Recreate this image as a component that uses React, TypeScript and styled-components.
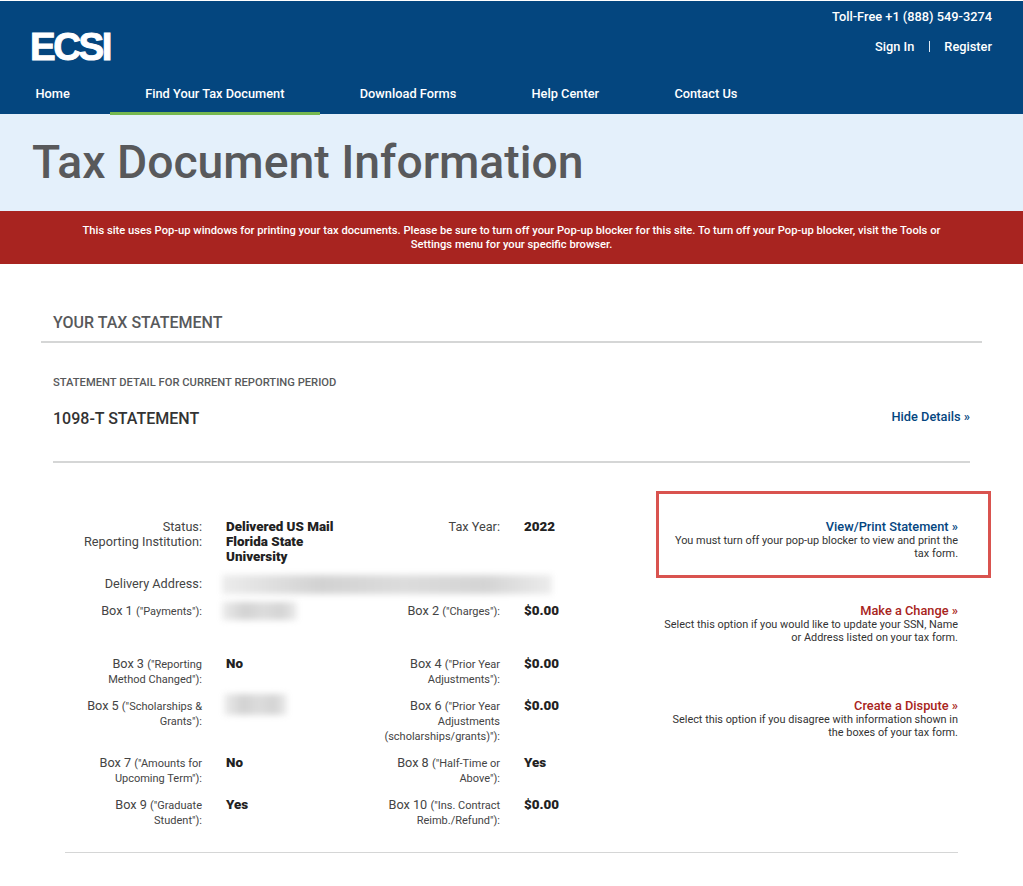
import React from 'react';
import styled, { createGlobalStyle } from 'styled-components';

const GlobalStyle = createGlobalStyle`
  html, body {
    margin: 0;
    padding: 0;
    background: #fff;
    font-family: Roboto, "Liberation Sans", sans-serif;
    color: #333;
  }
  * { box-sizing: border-box; }
`;

const Page = styled.div`
  width: 1023px;
  height: 886px;
  overflow: hidden;
`;

const Header = styled.header`
  height: 114px;
  margin-top: 1px;
  background: #04467f;
  display: flex;
  flex-direction: column;
  color: #fff;
`;

const TopRow = styled.div`
  height: 77px;
  display: flex;
  justify-content: space-between;
  padding: 0 31px;
`;

const Logo = styled.div`
  margin: 24px 0 0 -1px;
  font-family: "Liberation Sans", Arial, sans-serif;
  font-weight: 700;
  font-size: 38.5px;
  line-height: 44px;
  letter-spacing: -2.5px;
  -webkit-text-stroke: 1px #fff;
  color: #fff;
`;

const Account = styled.div`
  display: flex;
  flex-direction: column;
  align-items: flex-end;
  font-size: 12.8px;
  font-weight: 500;
`;

const Phone = styled.div`
  margin-top: 8px;
  line-height: 15px;
`;

const AccountLinks = styled.div`
  margin-top: 15px;
  display: flex;
  align-items: center;
  line-height: 15px;
`;

const AccountLink = styled.a`
  color: #fff;
`;

const Divider = styled.span`
  width: 1px;
  height: 11px;
  margin: 0 14px 0 15px;
  background: #dfe9f3;
`;

const Nav = styled.nav`
  flex: 1;
  display: flex;
  gap: 4.3px;
`;

const NavItem = styled.a<{ $active?: boolean }>`
  padding: 8px 35.5px 0 35.5px;
  font-size: 12.8px;
  font-weight: 500;
  line-height: 15px;
  color: #fff;
  border-bottom: 3px solid ${(p) => (p.$active ? '#76b84f' : 'transparent')};
`;

const Hero = styled.div`
  height: 97px;
  margin-top: -1px;
  padding: 20px 32px 0;
  background: #e4f0fb;
`;

const HeroTitle = styled.h1`
  margin: 0;
  font-size: 46.3px;
  font-weight: 500;
  line-height: 56px;
  color: #58595b;
`;

const Notice = styled.div`
  height: 53px;
  padding: 13px 80px 0;
  background: #a82420;
  color: #fff;
  font-size: 11.2px;
  font-weight: 500;
  line-height: 14px;
  text-align: center;
`;

const Content = styled.main`
  padding: 49px 41px 0;
`;

const SectionTitle = styled.h2`
  margin: 0;
  padding: 0 12px 10px;
  height: 30px;
  border-bottom: 2px solid #d5d6d6;
  font-size: 16px;
  font-weight: 500;
  line-height: 19px;
  color: #58595b;
`;

const Statement = styled.section`
  padding: 0 12px;
`;

const Kicker = styled.div`
  margin-top: 34px;
  font-size: 11.2px;
  font-weight: 500;
  line-height: 12px;
  color: #58595b;
`;

const StatementHead = styled.div`
  height: 54px;
  margin-top: 20px;
  display: flex;
  justify-content: space-between;
  border-bottom: 2px solid #d5d6d6;
`;

const StatementName = styled.div`
  font-size: 16px;
  font-weight: 500;
  line-height: 19px;
  color: #333;
`;

const HideLink = styled.a`
  font-size: 12.8px;
  font-weight: 500;
  line-height: 15px;
  color: #04467f;
`;

const Details = styled.div`
  display: flex;
  align-items: flex-start;
  justify-content: space-between;
  margin-top: 28px;
  margin-right: -21px;
`;

const Table = styled.div`
  width: 530px;
  padding-top: 28px;
`;

const Row = styled.div<{ $height: number }>`
  height: ${(p) => p.$height}px;
  display: grid;
  grid-template-columns: 149px 174px 124px 24px 60px;
`;

const Label = styled.div`
  padding-left: 27px;
  font-size: 12.7px;
  line-height: 15px;
  text-align: right;
  color: #444;
`;

const Small = styled.span`
  font-size: 11px;
  line-height: 1;
`;

const Value = styled.div`
  padding-left: 24px;
  font-size: 13.4px;
  font-weight: 900;
  line-height: 15px;
  color: #222;
`;

const ValueEnd = styled(Value)`
  padding-left: 0;
  grid-column: 5;
`;

const LabelEnd = styled(Label)`
  padding-left: 0;
  grid-column: 3;
`;

const ValueWide = styled(Value)`
  grid-column: 2 / span 4;
`;

const Blur = styled.div<{ $width: number; $height: number; $left: number; $top: number }>`
  width: ${(p) => p.$width}px;
  height: ${(p) => p.$height}px;
  margin-left: ${(p) => p.$left}px;
  margin-top: ${(p) => p.$top}px;
  background: linear-gradient(90deg, #ececec 0%, #d2d2d2 30%, #dcdcdc 55%, #d4d4d4 80%, #ececec 100%);
  filter: blur(3px);
`;

const Aside = styled.aside`
  width: 335px;
  display: flex;
  flex-direction: column;
`;

const Callout = styled.div<{ $boxed?: boolean; $height: number }>`
  height: ${(p) => p.$height}px;
  padding: ${(p) => (p.$boxed ? '26px 30px 0 3px' : '23px 30px 0 3px')};
  border: 3px solid ${(p) => (p.$boxed ? '#d9534f' : 'transparent')};
  text-align: right;
`;

const CalloutLink = styled.a<{ $tone: string }>`
  display: block;
  font-size: 12.8px;
  font-weight: 500;
  line-height: 14px;
  color: ${(p) => p.$tone};
`;

const CalloutText = styled.div`
  font-size: 10.9px;
  line-height: 13px;
  color: #333;
`;

const BottomRule = styled.div`
  height: 1px;
  margin: 0 24px;
  background: #d5d6d6;
`;

function App() {
  return (
    <Page>
      <GlobalStyle />
      <Header>
        <TopRow>
          <Logo>ECSI</Logo>
          <Account>
            <Phone>Toll-Free +1 (888) 549-3274</Phone>
            <AccountLinks>
              <AccountLink>Sign In</AccountLink>
              <Divider />
              <AccountLink>Register</AccountLink>
            </AccountLinks>
          </Account>
        </TopRow>
        <Nav>
          <NavItem>Home</NavItem>
          <NavItem $active>Find Your Tax Document</NavItem>
          <NavItem>Download Forms</NavItem>
          <NavItem>Help Center</NavItem>
          <NavItem>Contact Us</NavItem>
        </Nav>
      </Header>
      <Hero>
        <HeroTitle>Tax Document Information</HeroTitle>
      </Hero>
      <Notice>
        This site uses Pop-up windows for printing your tax documents. Please be sure to turn off your Pop-up blocker for this site. To turn off your Pop-up blocker, visit the Tools or Settings menu for your specific browser.
      </Notice>
      <Content>
        <SectionTitle>YOUR TAX STATEMENT</SectionTitle>
        <Statement>
          <Kicker>STATEMENT DETAIL FOR CURRENT REPORTING PERIOD</Kicker>
          <StatementHead>
            <StatementName>1098-T STATEMENT</StatementName>
            <HideLink>Hide Details »</HideLink>
          </StatementHead>
          <Details>
            <Table>
              <Row $height={57}>
                <Label>Status:<br />Reporting Institution:</Label>
                <Value>Delivered US Mail<br />Florida State<br />University</Value>
                <LabelEnd>Tax Year:</LabelEnd>
                <ValueEnd>2022</ValueEnd>
              </Row>
              <Row $height={27}>
                <Label>Delivery Address:</Label>
                <ValueWide><Blur $width={330} $height={19} $left={-4} $top={-1} /></ValueWide>
              </Row>
              <Row $height={53}>
                <Label>Box 1 <Small>("Payments"):</Small></Label>
                <Value><Blur $width={75} $height={18} $left={-4} $top={-1} /></Value>
                <LabelEnd>Box 2 <Small>("Charges"):</Small></LabelEnd>
                <ValueEnd>$0.00</ValueEnd>
              </Row>
              <Row $height={42}>
                <Label>Box 3 <Small>("Reporting Method Changed"):</Small></Label>
                <Value>No</Value>
                <LabelEnd>Box 4 <Small>("Prior Year Adjustments"):</Small></LabelEnd>
                <ValueEnd>$0.00</ValueEnd>
              </Row>
              <Row $height={57}>
                <Label>Box 5 <Small>("Scholarships &amp; Grants"):</Small></Label>
                <Value><Blur $width={63} $height={21} $left={-2} $top={-4} /></Value>
                <LabelEnd>Box 6 <Small>("Prior Year Adjustments (scholarships/grants)"):</Small></LabelEnd>
                <ValueEnd>$0.00</ValueEnd>
              </Row>
              <Row $height={42}>
                <Label>Box 7 <Small>("Amounts for Upcoming Term"):</Small></Label>
                <Value>No</Value>
                <LabelEnd>Box 8 <Small>("Half-Time or Above"):</Small></LabelEnd>
                <ValueEnd>Yes</ValueEnd>
              </Row>
              <Row $height={55}>
                <Label>Box 9 <Small>("Graduate Student"):</Small></Label>
                <Value>Yes</Value>
                <LabelEnd>Box 10 <Small>("Ins. Contract Reimb./Refund"):</Small></LabelEnd>
                <ValueEnd>$0.00</ValueEnd>
              </Row>
            </Table>
            <Aside>
              <Callout $boxed $height={87}>
                <CalloutLink $tone="#04467f">View/Print Statement »</CalloutLink>
                <CalloutText>You must turn off your pop-up blocker to view and print the tax form.</CalloutText>
              </Callout>
              <Callout $height={95}>
                <CalloutLink $tone="#a82420">Make a Change »</CalloutLink>
                <CalloutText>Select this option if you would like to update your SSN, Name or Address listed on your tax form.</CalloutText>
              </Callout>
              <Callout $height={95}>
                <CalloutLink $tone="#a82420">Create a Dispute »</CalloutLink>
                <CalloutText>Select this option if you disagree with information shown in the boxes of your tax form.</CalloutText>
              </Callout>
            </Aside>
          </Details>
        </Statement>
        <BottomRule />
      </Content>
    </Page>
  );
}

export default App;
